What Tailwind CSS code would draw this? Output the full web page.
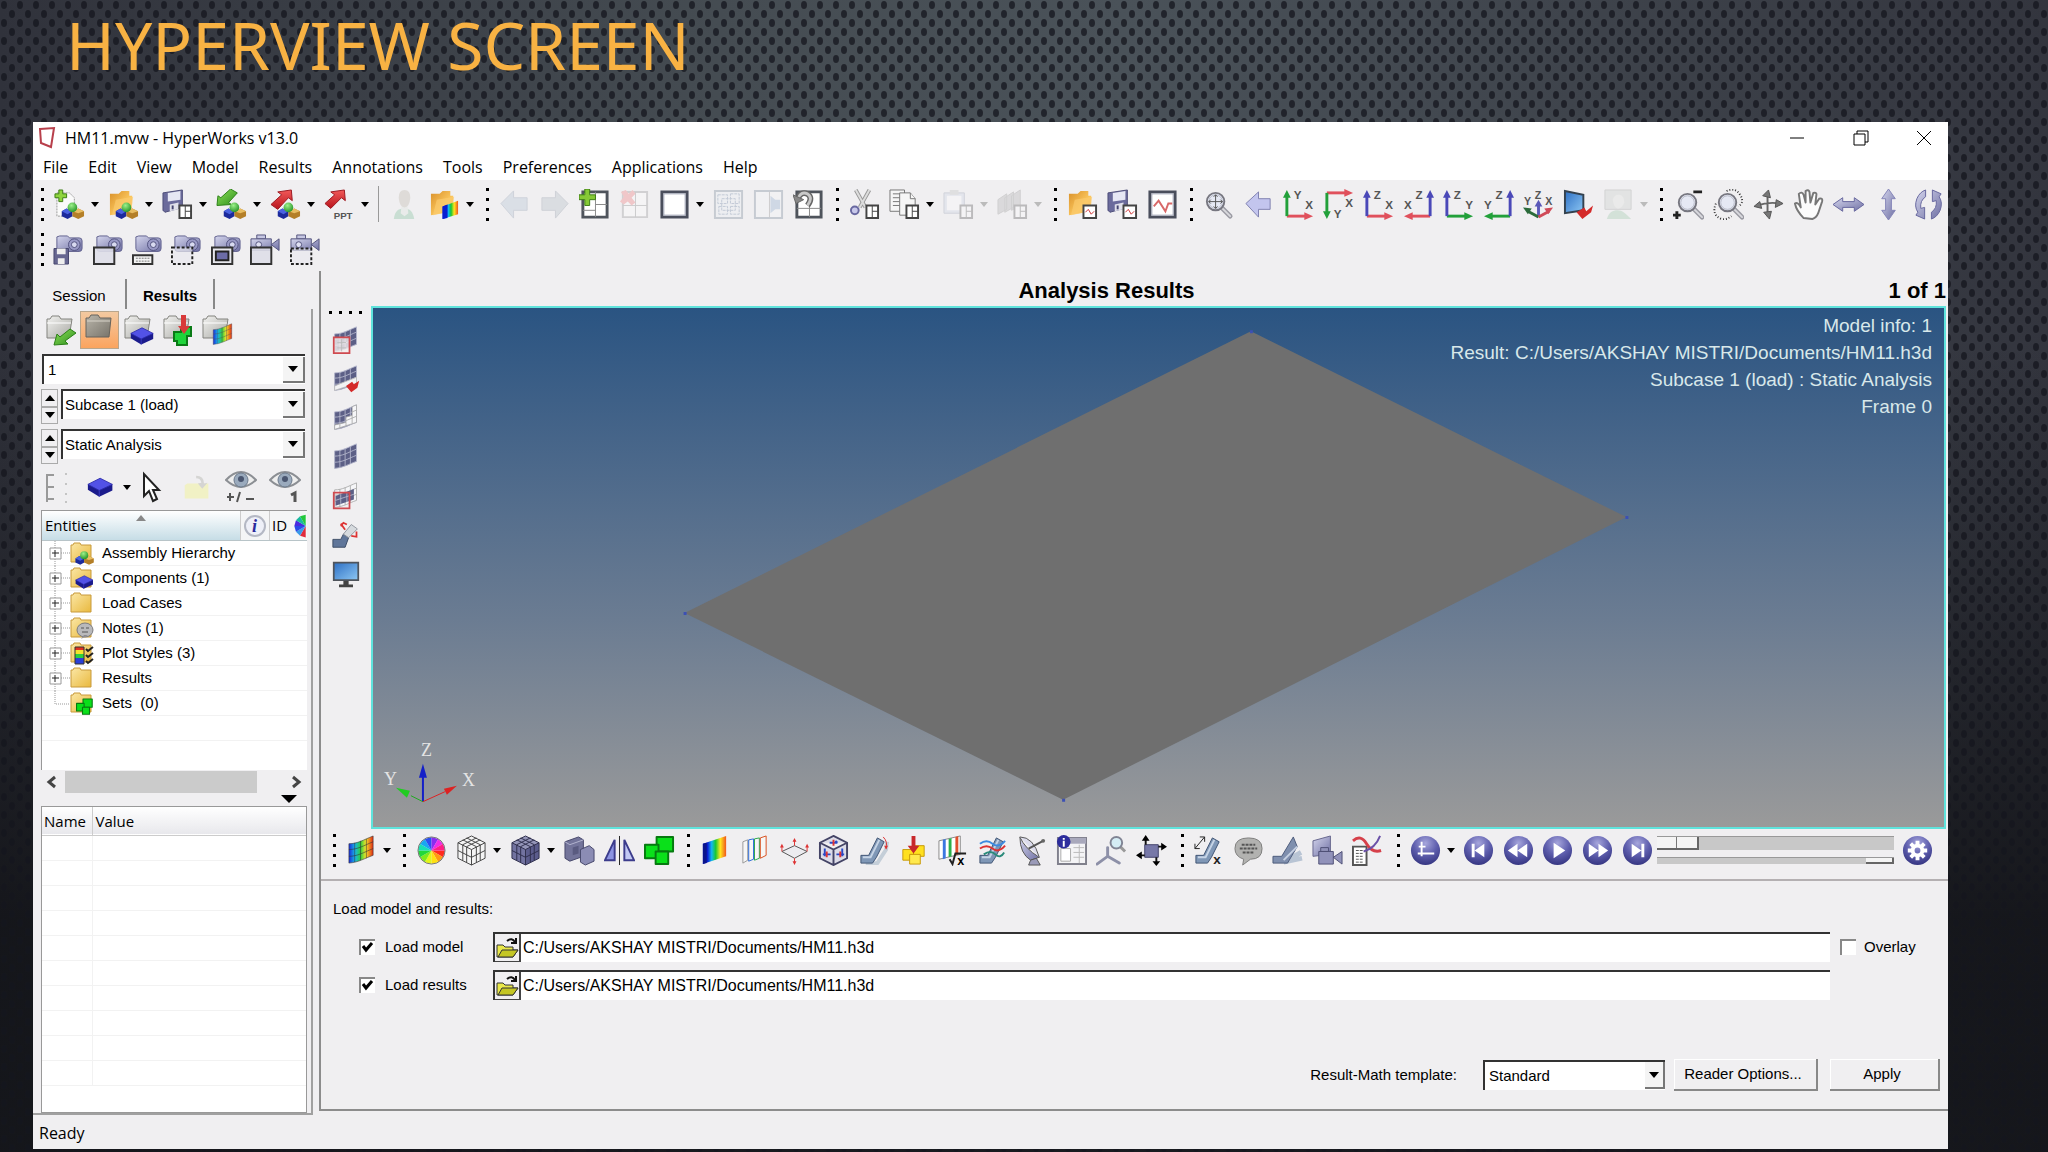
<!DOCTYPE html>
<html lang="en">

<head>
    <meta charset="UTF-8">
    <meta name="viewport" content="width=device-width, initial-scale=1.0">
    <title>Hyperview Screen</title>
    <script src="https://cdn.jsdelivr.net/npm/@tailwindcss/browser@4"></script>
</head>

<body class="relative min-h-screen flex flex-col bg-[#1b1c21] text-black font-['Liberation_Sans',sans-serif]">

    <!-- shared gradients, parts and icons -->
    <svg class="absolute w-0 h-0" aria-hidden="true">
        <defs>
            <linearGradient id="gLav" x1="0" y1="0" x2="1" y2="1"><stop offset="0" stop-color="#d4d5ec"/><stop offset="1" stop-color="#6f70a4"/></linearGradient>
            <linearGradient id="gOr" x1="0" y1="0" x2="1" y2="1"><stop offset="0" stop-color="#d9902a"/><stop offset=".6" stop-color="#fbc65c"/><stop offset="1" stop-color="#f0a832"/></linearGradient>
            <linearGradient id="gYel" x1="0" y1="0" x2="1" y2="1"><stop offset="0" stop-color="#fbe7a6"/><stop offset="1" stop-color="#e9b93f"/></linearGradient>
            <linearGradient id="gGray" x1="0" y1="0" x2="1" y2="1"><stop offset="0" stop-color="#f2f2f0"/><stop offset="1" stop-color="#a9a9a4"/></linearGradient>
            <linearGradient id="gDark" x1="0" y1="0" x2="1" y2="1"><stop offset="0" stop-color="#b9b5aa"/><stop offset="1" stop-color="#77736a"/></linearGradient>
            <linearGradient id="gRed" x1="0" y1="0" x2="0" y2="1"><stop offset="0" stop-color="#f25a5a"/><stop offset="1" stop-color="#b8141c"/></linearGradient>
            <linearGradient id="gGreen" x1="0" y1="0" x2="1" y2="1"><stop offset="0" stop-color="#8fe05a"/><stop offset="1" stop-color="#2c8f1c"/></linearGradient>
            <linearGradient id="gScr" x1="0" y1="0" x2="1" y2="1"><stop offset="0" stop-color="#2d6fc4"/><stop offset="1" stop-color="#8ec8f4"/></linearGradient>
            <linearGradient id="gRain"><stop offset="0" stop-color="#1a2bd8"/><stop offset=".25" stop-color="#18b6e8"/><stop offset=".48" stop-color="#2ecf3c"/><stop offset=".7" stop-color="#f5e22c"/><stop offset="1" stop-color="#e02a14"/></linearGradient>
            <linearGradient id="gStripe"><stop offset=".2" stop-color="#0a1ed2"/><stop offset=".38" stop-color="#12b8f0"/><stop offset=".55" stop-color="#19c832"/><stop offset=".75" stop-color="#ffe61e"/><stop offset="1" stop-color="#f0561c"/></linearGradient>
            <radialGradient id="gBall" cx=".5" cy=".25" r=".8"><stop offset="0" stop-color="#a6a6dc"/><stop offset=".5" stop-color="#5f5fae"/><stop offset="1" stop-color="#30307c"/></radialGradient>
            <radialGradient id="gGrn" cx=".4" cy=".3" r=".8"><stop offset="0" stop-color="#9df08a"/><stop offset="1" stop-color="#178a1c"/></radialGradient>

            <g id="balls">
                <path d="M8 23l5-3 6 3v5l-5 3-6-3z" fill="#1c2a9c"/><path d="M8 23l5-3 6 3-5 3z" fill="#4a62e0"/>
                <path d="M19 23l6-3 6 3v5l-6 3-6-3z" fill="#b47f28"/><path d="M19 23l6-3 6 3-6 2z" fill="#e8bd62"/>
                <circle cx="19" cy="19" r="5" fill="url(#gGrn)"/>
            </g>
            <path id="plus" d="M5 1h4v4h4v4H9v4H5V9H1V5h4z" fill="#8fd43e" stroke="#3c7d14"/>
            <g id="folderOr"><path d="M2 27V5h9l3-3h8v5h3l-1 16z" fill="url(#gOr)"/><path d="M4 27l4-16 18-3-2 15z" fill="#fbcb6e" opacity=".7"/></g>
            <g id="disk"><path d="M1 4l20-3v18L3 24l-2-2z" fill="#6b6b9c" stroke="#4c4c78"/><path d="M6 4l13-2v9L6 13z" fill="#e6e7f4"/><path d="M8 16l9-2v7l-9 2z" fill="#e0e0ea"/><path d="M10 17h2v4h-2z" fill="#444470"/></g>
            <g id="pane" fill="#fff" stroke="#444" stroke-width="2"><path d="M18 17h12v13H18z"/><path d="M24 17v13M24 23h6" stroke-width="1"/></g>
            <g id="plotpane"><path d="M17 17h13v13H17z" fill="#fff" stroke="#444" stroke-width="2"/><path d="M19 24l3-3 3 5 3-3" fill="none" stroke="#c33"/></g>
            <g id="cam"><path d="M4 5V3l3-1h8l2 2h10q3 0 3 3v8q0 3-3 3H7q-3 0-3-3z" fill="url(#gLav)" stroke="#62628e"/><circle cx="22" cy="11" r="6" fill="#9a9ac6" stroke="#52527e"/><circle cx="22" cy="11" r="3" fill="#d8daf0" stroke="#52527e"/></g>
            <g id="video"><path d="M7 1h9v4H7z" fill="#c6c7e2" stroke="#55557e"/><path d="M1 5h21v12H1zM22 11l8-6v12z" fill="url(#gLav)" stroke="#55557e"/><circle cx="9" cy="11" r="3" fill="#dfe0f2" stroke="#55557e"/></g>
            <g id="mag"><path d="M18 18l9 9" stroke="#9a9aa2" stroke-width="5" stroke-linecap="round"/><path d="M18 18l9 9" stroke="#d9d9de" stroke-width="2" stroke-linecap="round"/><circle cx="12" cy="12" r="9" fill="#e6e9f4" stroke="#777780" stroke-width="2"/><circle cx="12" cy="12" r="7" fill="none" stroke="#b9bcc8"/></g>
            <g id="cube"><path d="M16 1l14 7v16l-14 7-14-7V8z"/><path d="M2 8l14 7 14-7M16 15v16M7 5l14 7v16M25 5l-14 7v16M2 16l14 7 14-7M11 3l14 7v16M21 3L7 10v16" fill="none"/></g>
            <g id="grayfolder"><path d="M2 24V5h3l2-3h7l2 3h11l-3 19z" fill="url(#gGray)" stroke="#83837e"/><path d="M2 9h24" stroke="#fff"/></g>
            <g id="bluebox"><path d="M1 13v6l13 8 15-7v-7z" fill="#1b1b8c"/><path d="M1 13l14-7 14 7-15 7z" fill="#5252e6" stroke="#2a2aa8"/><path d="M14 20v7" stroke="#4040c8"/></g>
            <g id="tree-folder"><path d="M1 21V4h2l1-2h6l1 2h10v17z" fill="url(#gYel)" stroke="#c89a3c"/></g>
            <g id="clover" fill="#0ae01a" stroke="#067a10" stroke-width="2" stroke-linejoin="round"><path d="M13 2h17v15H13z"/><path d="M1 10h14v14H1z"/><path d="M12 17h13v13H12z"/></g>
            <g id="vmesh"><path d="M3 9C12 9 18 5 28 1v20c-9 3-14 7-25 8z"/><path d="M3 15c9 0 15-4 25-8M3 22c9 0 15-4 25-8M9 8v20M15 6v20M21 4v20" fill="none"/></g>
            <g id="beam"><path d="M3 21h8L20 3l7 4-8 16-4 6H3z" fill="#7f97b6" stroke="#3f5474"/><path d="M5 23h8L22 5" fill="none" stroke="#c6d4e6" stroke-width="2"/></g>

            <symbol id="i-grip" viewBox="0 0 16 34"><path d="M8 1h3v3H8zM8 11h3v3H8zM8 21h3v3H8zM8 31h3v3H8z"/></symbol>
            <symbol id="i-down" viewBox="0 0 10 6"><path d="M0 0h10L5 6z"/></symbol>
            <symbol id="i-up" viewBox="0 0 10 6"><path d="M0 6h10L5 0z"/></symbol>

            <symbol id="i-new" viewBox="0 0 32 32"><path d="M3 4h13l5 5v19H3z" fill="#fafafa" stroke="#999" stroke-dasharray="2 1"/><use href="#balls"/><use href="#plus"/></symbol>
            <symbol id="i-open" viewBox="0 0 32 32"><use href="#folderOr"/><use href="#balls"/></symbol>
            <symbol id="i-save" viewBox="0 0 32 32"><use href="#disk"/><use href="#pane"/></symbol>
            <symbol id="i-import" viewBox="0 0 32 32"><path d="M1 17L2 7l3 2L15 0l7 4-9 10 3 2z" fill="url(#gGreen)" stroke="#2c8018"/><use href="#balls"/></symbol>
            <symbol id="i-export" viewBox="0 0 32 32"><path d="M22 1l1 11-4-3L8 21l-7-5L12 6 8 3z" fill="url(#gRed)" stroke="#9c1820"/><use href="#balls"/></symbol>
            <symbol id="i-ppt" viewBox="0 0 32 32"><path d="M21 1l1 11-4-3L7 20l-6-5L11 6 7 3z" fill="url(#gRed)" stroke="#9c1820"/><text x="10" y="31" font-family="Liberation Sans" font-size="10" font-weight="bold" fill="#555">PPT</text></symbol>
            <symbol id="i-user" viewBox="0 0 32 32"><g opacity=".45"><path d="M5 31c1-9 5-11 11-11s9 4 10 11z" fill="#9bcbb0"/><path d="M13 17h6l1 8-4 3-4-3z" fill="#e2e8e2"/><path d="M10 9q0-8 6-8t6 8q-1 10-6 10t-6-10z" fill="#c9c4bb"/></g></symbol>
            <symbol id="i-results" viewBox="0 0 32 32"><use href="#folderOr"/><path d="M14 18l16-6v14l-16 5z" fill="url(#gStripe)"/><path d="M14 18l5-2v14l-5 1z" fill="#0a1ed2"/></symbol>
            <symbol id="i-prev" viewBox="0 0 32 32"><path d="M2 15L15 2v7h14v13H15v8z" fill="#cdd5e0" stroke="#b9c0cc" opacity=".6"/></symbol>
            <symbol id="i-next" viewBox="0 0 32 32"><path d="M30 15L17 2v7H3v13h14v8z" fill="#cdd2d8" stroke="#b9bec6" opacity=".6"/></symbol>
            <symbol id="i-addpage" viewBox="0 0 32 32"><path d="M4 3h25v26H4z" fill="#fff" stroke="#4f545c" stroke-width="3"/><path d="M17 3v26M17 16h12M4 22h13" stroke="#888"/><path d="M6 0h5v6h6v5h-6v6H6v-6H0V6h6z" fill="#86c936" stroke="#3c7d14"/></symbol>
            <symbol id="i-delpage" viewBox="0 0 32 32"><g opacity=".35"><path d="M4 3h25v26H4z" fill="#fff" stroke="#999" stroke-width="2"/><path d="M17 3v26M4 17h25" stroke="#888"/><path d="M2 3l5-2 3 4 4-4 3 4-4 4 4 5-4 3-4-4-4 3-4-3 4-5z" fill="#f08080"/></g></symbol>
            <symbol id="i-layout" viewBox="0 0 32 32"><path d="M3 3h26v26H3z" fill="#fff" stroke="#4a4e5c" stroke-width="3"/><path d="M5 5h22v22H5z" fill="none" stroke="#9ea2b4"/></symbol>
            <symbol id="i-swap" viewBox="0 0 32 32"><g opacity=".4"><path d="M2 2h28v28H2z" fill="#e9eef2" stroke="#8a96a4" stroke-width="2"/><path d="M5 6h10v9H5zM18 5h9v10h-9zM6 18h9v8H6zM18 18h9v8h-9zM9 10h14v12H9z" fill="none" stroke="#7f93ae" stroke-dasharray="3 1"/></g></symbol>
            <symbol id="i-expand" viewBox="0 0 32 32"><g opacity=".4"><path d="M2 2h28v28H2z" fill="#f4f6f7" stroke="#8a96a4" stroke-width="2"/><path d="M17 3v26" stroke="#999"/><path d="M18 7l5 4h5v10h-5l-5 4z" fill="#9fb8d4"/></g></symbol>
            <symbol id="i-sync" viewBox="0 0 32 32"><path d="M4 3h25v26H4z" fill="#fff" stroke="#4f545c" stroke-width="3"/><path d="M17 3v26M4 20h25" stroke="#888"/><path d="M5 10q3-8 10-5 6 4 0 12" fill="none" stroke="#666" stroke-width="6"/><path d="M5 10q3-8 10-5 6 4 0 12" fill="none" stroke="#c9c9c9" stroke-width="3"/><path d="M0 6l3 9 8-4z" fill="#888" stroke="#666"/></symbol>
            <symbol id="i-cut" viewBox="0 0 32 32"><path d="M7 1l10 18M21 1L11 19" stroke="#999" stroke-width="4"/><path d="M7 1l10 18M21 1L11 19" stroke="#ddd" stroke-width="2"/><circle cx="6" cy="22" r="4" fill="#c8c8ea" stroke="#6868a0" stroke-width="2"/><use href="#pane"/></symbol>
            <symbol id="i-copy" viewBox="0 0 32 32"><g fill="#f6f6f6" stroke="#777"><path d="M1 1h15v22H1z"/><path d="M4 5h9M4 9h9M4 13h9M4 17h9"/><path d="M11 4h11l5 6v17H11z"/><path d="M22 4v6h5"/></g><use href="#pane"/></symbol>
            <symbol id="i-paste" viewBox="0 0 32 32"><g opacity=".3"><path d="M1 4h21v21H1z" fill="#c7d0e2" stroke="#8a94a8"/><path d="M4 7h15v15H4z" fill="#fff"/><path d="M7 1h9v5H7z" fill="#bbb"/><use href="#pane"/></g></symbol>
            <symbol id="i-overlay" viewBox="0 0 32 32"><g opacity=".3"><path d="M1 11l9-6v16l-9 5zM8 9l9-6v16l-9 5zM15 7l9-6v16l-9 5z" fill="#aaa" stroke="#888"/><use href="#pane"/></g></symbol>
            <symbol id="i-openplot" viewBox="0 0 32 32"><use href="#folderOr"/><use href="#plotpane"/></symbol>
            <symbol id="i-saveplot" viewBox="0 0 32 32"><use href="#disk"/><use href="#plotpane"/></symbol>
            <symbol id="i-plot" viewBox="0 0 32 32"><path d="M3 3h26v26H3z" fill="#fff" stroke="#4a4e5c" stroke-width="3"/><path d="M5 5h22v22H5z" fill="none" stroke="#9ea2b4"/><path d="M7 18l5-6 7 11 3-8h4" fill="none" stroke="#d86868" stroke-width="2"/></symbol>
            <symbol id="i-fit" viewBox="0 0 32 32"><g transform="translate(1 1)"><use href="#mag"/><path d="M12 5v14M5 12h14M10 7l2-2 2 2M10 17l2 2 2-2M7 10l-2 2 2 2M17 10l2 2-2 2" fill="none" stroke="#555"/></g></symbol>
            <symbol id="i-back" viewBox="0 0 32 32"><path d="M3 15L16 3v7h12v11H16v8z" fill="#c3c5ee" stroke="#7f80b0"/></symbol>

            <g id="ax-up"><path d="M4 28V8" stroke-width="3"/><path d="M0 9l4-8 4 8z" stroke="none"/></g>
            <g id="ax-right"><path d="M4 28h20" stroke-width="3"/><path d="M22 24l9 4-9 4z" stroke="none"/></g>
            <symbol id="i-yx" viewBox="0 0 32 32"><g stroke="#e0505c" fill="#e0505c"><use href="#ax-right"/></g><g stroke="#22a03a" fill="#22a03a"><use href="#ax-up"/></g><g font-family="Liberation Sans" font-size="12" font-weight="bold" fill="#555"><text x="11" y="10">Y</text><text x="23" y="21">X</text></g></symbol>
            <symbol id="i-xy" viewBox="0 0 32 32"><g transform="matrix(1 0 0 -1 0 32)"><g stroke="#e0505c" fill="#e0505c"><use href="#ax-right"/></g><g stroke="#22a03a" fill="#22a03a"><use href="#ax-up"/></g></g><g font-family="Liberation Sans" font-size="12" font-weight="bold" fill="#555"><text x="11" y="30">Y</text><text x="23" y="19">X</text></g></symbol>
            <symbol id="i-zx" viewBox="0 0 32 32"><g stroke="#e0505c" fill="#e0505c"><use href="#ax-right"/></g><g stroke="#4a48b8" fill="#4a48b8"><use href="#ax-up"/></g><g font-family="Liberation Sans" font-size="12" font-weight="bold" fill="#555"><text x="11" y="10">Z</text><text x="23" y="21">X</text></g></symbol>
            <symbol id="i-xz" viewBox="0 0 32 32"><g transform="matrix(-1 0 0 1 32 0)"><g stroke="#e0505c" fill="#e0505c"><use href="#ax-right"/></g><g stroke="#4a48b8" fill="#4a48b8"><use href="#ax-up"/></g></g><g font-family="Liberation Sans" font-size="12" font-weight="bold" fill="#555"><text x="13" y="10">Z</text><text x="1" y="21">X</text></g></symbol>
            <symbol id="i-zy" viewBox="0 0 32 32"><g stroke="#22a03a" fill="#22a03a"><use href="#ax-right"/></g><g stroke="#4a48b8" fill="#4a48b8"><use href="#ax-up"/></g><g font-family="Liberation Sans" font-size="12" font-weight="bold" fill="#555"><text x="11" y="10">Z</text><text x="23" y="21">Y</text></g></symbol>
            <symbol id="i-yz" viewBox="0 0 32 32"><g transform="matrix(-1 0 0 1 32 0)"><g stroke="#22a03a" fill="#22a03a"><use href="#ax-right"/></g><g stroke="#4a48b8" fill="#4a48b8"><use href="#ax-up"/></g></g><g font-family="Liberation Sans" font-size="12" font-weight="bold" fill="#555"><text x="13" y="10">Z</text><text x="1" y="21">Y</text></g></symbol>
            <symbol id="i-iso" viewBox="0 0 32 32"><path d="M16 29V16" stroke="#5a58b8" stroke-width="3"/><path d="M12 18l4-7 4 7z" fill="#5a58b8"/><path d="M16 29L5 23" stroke="#2b6a3a" stroke-width="3"/><path d="M0 19l9 1-4 6z" fill="#2b6a3a"/><path d="M16 29l11-6" stroke="#d04a58" stroke-width="3"/><path d="M31 19l-9 1 4 6z" fill="#d04a58"/><g font-family="Liberation Sans" font-size="11" font-weight="bold" fill="#555"><text x="1" y="17">Y</text><text x="12" y="10">Z</text><text x="23" y="17">X</text></g></symbol>
            <symbol id="i-applyview" viewBox="0 0 32 32"><path d="M2 2l19 4v16L2 25z" fill="url(#gScr)" stroke="#34414e" stroke-width="2"/><path d="M14 24l8-5 2 4 7-6-2 7-9 7z" fill="#d42a2a"/></symbol>
            <symbol id="i-savedview" viewBox="0 0 32 32"><g opacity=".4"><path d="M2 1h27v20H2z" fill="#cfd3d0" stroke="#a8aaa8"/><path d="M4 31c2-7 6-9 11-9s8 3 14 9z" fill="#a9cdb4"/><path d="M10 11q2-6 7-5t5 8q-3 7-7 6t-5-9z" fill="#e2e4e0"/></g></symbol>
            <symbol id="i-zoom" viewBox="0 0 32 32"><g transform="translate(3 2)"><use href="#mag"/></g><path d="M21 3h9M0 27h8M4 23v8" stroke="#222" stroke-width="3"/></symbol>
            <symbol id="i-circlezoom" viewBox="0 0 32 32"><g transform="translate(3 2)"><use href="#mag"/></g><path d="M14 2q9-4 14 4t-2 12M3 15q-5 12 6 16 5 1 10-3" fill="none" stroke="#333" stroke-width="2" stroke-dasharray="1 2"/></symbol>
            <symbol id="i-rotate" viewBox="0 0 32 32"><path d="M15 4v24M4 17q12-4 24-2" fill="none" stroke="#666" stroke-width="2"/><path d="M10 7l6-6 2 8zM11 24l6 7 2-8zM7 13l-6 5 8 2zM24 11l7 4-8 4z" fill="#777" stroke="#555"/></symbol>
            <symbol id="i-pan" viewBox="0 0 32 32"><path d="M11 30C6 25 3 20 2 15q3-2 6 4L6 5q3-3 5 1l2 8V2q3-2 4 1l1 11 3-10q4-1 3 3l-1 9 4-6q4-1 3 3l-4 12q-2 5-6 6z" fill="#fcfcfc" stroke="#777" stroke-width="2" stroke-linejoin="round"/></symbol>
            <symbol id="i-horiz" viewBox="0 0 32 32"><path d="M0 16l10-7v4h12V9l10 7-10 7v-4H10v4z" fill="url(#gLav)" stroke="#66669e"/></symbol>
            <symbol id="i-vert" viewBox="0 0 32 32"><path d="M16 0l7 10h-4v12h4l-7 10-7-10h4V10H9z" fill="url(#gLav)" stroke="#8484b8"/></symbol>
            <symbol id="i-spin" viewBox="0 0 32 32"><path d="M13 1v7q-6 4-5 12l4-1v12l-9-4 2-3Q1 18 4 10q3-7 9-9zM19 31v-7q6-4 5-12l-4 1V1l9 4-2 3q4 6 1 14-3 7-9 9z" fill="url(#gLav)" stroke="#66669e"/></symbol>

            <symbol id="i-camsave" viewBox="0 0 32 32"><use href="#cam"/><path d="M1 15h15v16H1z" fill="#666690" stroke="#44446c"/><path d="M4 15h9v6H4zM5 25h7v6H5z" fill="#eee"/></symbol>
            <symbol id="i-camwin" viewBox="0 0 32 32"><use href="#cam"/><path d="M1 14h21v17H1z" fill="#dedee8" fill-opacity=".9" stroke="#333" stroke-width="2"/></symbol>
            <symbol id="i-camkey" viewBox="0 0 32 32"><use href="#cam"/><path d="M1 22h20v9H1z" fill="#f4f4f4" stroke="#333" stroke-width="2"/><path d="M4 25h14M4 28h14" stroke="#777" stroke-dasharray="2 1"/></symbol>
            <symbol id="i-camsel" viewBox="0 0 32 32"><use href="#cam"/><path d="M1 14h21v17H1z" fill="#e8e8ee" fill-opacity=".7" stroke="#222" stroke-width="2" stroke-dasharray="3 2"/></symbol>
            <symbol id="i-camview" viewBox="0 0 32 32"><use href="#cam"/><path d="M1 14h21v17H1z" fill="#e8e8ee" stroke="#333" stroke-width="2"/><path d="M5 18h13v9H5z" fill="#6c6ca6" stroke="#222" stroke-width="2"/></symbol>
            <symbol id="i-vidwin" viewBox="0 0 32 32"><use href="#video"/><path d="M1 14h21v17H1z" fill="#dedee8" fill-opacity=".9" stroke="#333" stroke-width="2"/></symbol>
            <symbol id="i-vidsel" viewBox="0 0 32 32"><use href="#video"/><path d="M1 15h21v16H1z" fill="#e8e8ee" fill-opacity=".7" stroke="#222" stroke-width="2" stroke-dasharray="3 2"/></symbol>

            <symbol id="i-f-load" viewBox="0 0 32 32"><use href="#grayfolder"/><path d="M9 31l3-11 3 3 10-8 6 4-11 8 3 3z" fill="url(#gGreen)" stroke="#2c8018"/></symbol>
            <symbol id="i-f-all" viewBox="0 0 32 32"><path d="M2 23V4h3l2-3h7l2 3h11l-2 19z" fill="url(#gDark)" stroke="#66635c"/><path d="M3 7h23" stroke="#d8d4ca"/></symbol>
            <symbol id="i-f-comp" viewBox="0 0 32 32"><use href="#grayfolder"/><g transform="translate(7 9) scale(.8)"><use href="#bluebox"/></g></symbol>
            <symbol id="i-f-set" viewBox="0 0 32 32"><use href="#grayfolder"/><path d="M19 13h10v9h-4v9H15v-4h-3v-9h7z" fill="#1fd43a" stroke="#0a7a16" stroke-width="2"/><path d="M19 1h5v11h4l-6 8-6-8h3z" fill="#d83a3a"/></symbol>
            <symbol id="i-f-plot" viewBox="0 0 32 32"><use href="#grayfolder"/><g transform="translate(10 9) scale(.74)" fill="url(#gRain)" stroke="#555" stroke-opacity=".6"><use href="#vmesh"/></g></symbol>
            <symbol id="i-bluebox" viewBox="0 0 32 32"><use href="#bluebox"/></symbol>
            <symbol id="i-cursor" viewBox="0 0 32 32"><path d="M9 3v22l5-5 4 10 4-2-4-9h6z" fill="#fff" stroke="#222" stroke-width="2"/></symbol>
            <symbol id="i-faded" viewBox="0 0 32 32"><g opacity=".6"><path d="M2 14l3-2h24v17H2z" fill="#f3f3a8"/><path d="M15 3q9 0 9 9l4-1-6 7-5-6 4-1q-1-5-6-5z" fill="#c4c4c0"/></g></symbol>
            <g id="eye"><path d="M1 9Q16-7 31 9 16 23 1 9z" fill="#eee" stroke="#8c8f94" stroke-width="2"/><circle cx="16" cy="9" r="7" fill="#9aaabd" stroke="#6c7a8c"/><circle cx="16" cy="8" r="3" fill="#4a5670"/></g>
            <symbol id="i-eyepm" viewBox="0 0 32 32"><use href="#eye"/><path d="M2 26h7M5 22v8M21 28h8M15 21l-3 10" stroke="#555" stroke-width="2"/></symbol>
            <symbol id="i-eye1" viewBox="0 0 32 32"><use href="#eye"/><path d="M22 24l4-2v9" fill="none" stroke="#555" stroke-width="3"/></symbol>
            <symbol id="i-hier" viewBox="0 0 32 32"><path d="M6 3v28M6 4h7M6 16h7M6 28h7" stroke="#999" stroke-width="2"/><path d="M24 2h2v2h-2zM24 12h2v2h-2zM24 22h2v2h-2zM24 30h2v2h-2z" fill="#c4c4c4"/></symbol>
            <symbol id="i-info" viewBox="0 0 24 24"><circle cx="12" cy="12" r="10" fill="#eef0f8" stroke="#b4b8c4" stroke-width="2"/><text x="9" y="18" font-family="Liberation Serif" font-size="18" font-weight="bold" font-style="italic" fill="#2a2a9c">i</text></symbol>

            <symbol id="i-t-asm" viewBox="0 0 24 24"><use href="#tree-folder"/><g transform="translate(-1 -1) scale(.8)"><use href="#balls"/></g></symbol>
            <symbol id="i-t-comp" viewBox="0 0 24 24"><use href="#tree-folder"/><g transform="translate(5 6) scale(.62)"><use href="#bluebox"/></g></symbol>
            <symbol id="i-t-plain" viewBox="0 0 24 24"><use href="#tree-folder"/></symbol>
            <symbol id="i-t-note" viewBox="0 0 24 24"><use href="#tree-folder"/><ellipse cx="15" cy="14" rx="8" ry="7" fill="#b9b9bb" stroke="#7c7c80"/><path d="M11 23l3-4h4z" fill="#8c8c90"/><path d="M11 12h3M16 12h3M12 16h6" stroke="#555"/></symbol>
            <symbol id="i-t-style" viewBox="0 0 24 24"><use href="#tree-folder"/><path d="M5 6h9v17H5z" fill="#e03020"/><path d="M5 9h9v14H5z" fill="#f5e22c"/><path d="M5 13h9v10H5z" fill="#2ecf3c"/><path d="M5 17h9v6H5z" fill="#2a3fd8"/><path d="M5 6h9v17H5z" fill="none" stroke="#333"/><path d="M16 8l2 2 5-4M16 14l2 2 5-4M16 20l2 2 5-4" fill="none" stroke="#222" stroke-width="2"/></symbol>
            <symbol id="i-t-set" viewBox="0 0 24 24"><use href="#tree-folder"/><g transform="translate(6 7) scale(.54)"><use href="#clover"/></g></symbol>

            <symbol id="i-contour" viewBox="0 0 32 32"><g fill="url(#gRain)" stroke="#333" stroke-opacity=".6"><use href="#vmesh"/></g></symbol>
            <symbol id="i-wheel" viewBox="0 0 32 32">
                <path d="M16 16L30 16 28 23z" fill="#ff2a1e"/><path d="M16 16L28 23 23 28z" fill="#ff9a12"/><path d="M16 16L23 28 16 30z" fill="#ffe012"/>
                <path d="M16 16L16 30 9 28z" fill="#e2f51a"/><path d="M16 16L9 28 4 23z" fill="#7eea1c"/><path d="M16 16L4 23 2 16z" fill="#22d83a"/>
                <path d="M16 16L2 16 4 9z" fill="#18e0b4"/><path d="M16 16L4 9 9 4z" fill="#18a8f0"/><path d="M16 16L9 4 16 2z" fill="#2a50f0"/>
                <path d="M16 16L16 2 23 4z" fill="#8a2cf0"/><path d="M16 16L23 4 28 9z" fill="#f02ce6"/><path d="M16 16L28 9 30 16z" fill="#ff1e86"/>
                <circle cx="16" cy="16" r="14" fill="none" stroke="#777" stroke-width="1"/></symbol>
            <symbol id="i-wheelhalf" viewBox="2 0 14 32">
                <path d="M16 16L16 30 9 28z" fill="#e02a3c"/><path d="M16 16L9 28 4 23z" fill="#3a9ae8"/><path d="M16 16L4 23 2 16z" fill="#2a4ae8"/>
                <path d="M16 16L2 16 4 9z" fill="#4a2ae0"/><path d="M16 16L4 9 9 4z" fill="#18b8a0"/><path d="M16 16L9 4 16 2z" fill="#22c83a"/></symbol>
            <symbol id="i-wire" viewBox="0 0 32 32"><g fill="#f4f4f4" stroke="#444"><use href="#cube"/></g></symbol>
            <symbol id="i-shaded" viewBox="0 0 32 32"><path d="M2 8l14-7 14 7-14 7z" fill="#9495b8"/><path d="M2 8l14 7v16L2 24z" fill="#7273a0"/><path d="M30 8l-14 7v16l14-7z" fill="#5b5c8c"/><g fill="none" stroke="#2e2e4c"><use href="#cube"/></g></symbol>
            <symbol id="i-parts" viewBox="0 0 32 32"><path d="M1 7l14-5 5 3v17L6 27l-5-3z" fill="#73749a" stroke="#46476a"/><path d="M1 7l5 3 14-5" fill="none" stroke="#b4b5d0"/><path d="M17 15l9-4 5 4v12l-9 4-5-3z" fill="#8b8cb4" stroke="#46476a"/><path d="M9 13l6-2v8l-6 2z" fill="#5a5b80"/></symbol>
            <symbol id="i-mirror" viewBox="0 0 32 32"><path d="M11 5v21H1z" fill="#8c94e2" stroke="#3c3c8c" stroke-width="2"/><path d="M21 5v21h10z" fill="#c2c8f4" stroke="#3c3c8c" stroke-width="2"/><path d="M16 1v30" stroke="#222"/></symbol>
            <symbol id="i-clover" viewBox="0 0 32 32"><use href="#clover"/></symbol>
            <symbol id="i-bands" viewBox="0 0 32 32"><path d="M4 9L28 1v21L4 30z" fill="url(#gStripe)"/><path d="M4 9l4-1v21l-4 1z" fill="#0a148c"/></symbol>
            <symbol id="i-iso2" viewBox="0 0 32 32"><g fill="#f6f6f6"><path d="M4 7l5-2v21l-5 3z" stroke="#999"/><path d="M10 5l5-1v21l-5 2z" stroke="#2a6ad8"/><path d="M16 4l5-1v21l-5 2z" stroke="#2aa84a"/><path d="M22 3l6-2v20l-6 3z" stroke="#d8501e"/></g></symbol>
            <symbol id="i-vector" viewBox="0 0 32 32"><path d="M3 17l13-6 13 6-13 7z" fill="#ececf0" stroke="#555"/><path d="M16 11V5M3 17v-5M29 17v-5M16 24v5" stroke="#d33"/><path d="M14 7l2-4 2 4zM1 13l2-4 2 4zM27 13l2-4 2 4zM14 27h4l-2 4z" fill="#d33"/></symbol>
            <symbol id="i-tensor" viewBox="0 0 32 32"><path d="M16 1l14 7v16l-14 7-14-7V8zM2 8l14 7 14-7M16 15v16" fill="#dcdce8" stroke="#444466" stroke-width="2"/><path d="M12 8h8M20 8l-2-2M7 14v8M5 20h8M25 14v8M19 20h8" stroke="#2a4ac8" stroke-width="2" fill="none"/><path d="M16 5v6M9 17v6M23 17v6" stroke="#d33" stroke-width="2"/></symbol>
            <symbol id="i-deform" viewBox="0 0 32 32"><path d="M8 29h12l9-14 1-8" fill="none" stroke="#c4ced8" stroke-width="4"/><use href="#beam"/><path d="M26 2q5 5 3 12" fill="none" stroke="#d33"/><path d="M27 11l2 4 2-4z" fill="#d33"/></symbol>
            <symbol id="i-fbd" viewBox="0 0 32 32"><path d="M16 11h11v11H16z" fill="#ffe01e" stroke="#c79a0a"/><path d="M5 15h11v11H5z" fill="#ffe01e" stroke="#c79a0a"/><path d="M12 20h11v10H12z" fill="#ffe94e" stroke="#c79a0a"/><path d="M14 1h4v10h4l-6 8-6-8h4z" fill="#c8282c"/></symbol>
            <symbol id="i-derived" viewBox="0 0 32 32"><path d="M2 6L24 1v19L2 25z" fill="#fff" stroke="#888"/><path d="M6 5l3-1v20l-3 1z" fill="#3c78e0"/><path d="M12 4l3-1v19l-3 1z" fill="#2cb04a"/><path d="M19 2l3-1v19l-3 1z" fill="#e0502c"/><path d="M13 25l3 5 3-11h11" fill="none" stroke="#222" stroke-width="2"/><text x="21" y="31" font-family="Liberation Sans" font-size="13" font-weight="bold">x</text></symbol>
            <symbol id="i-stream" viewBox="0 0 32 32"><use href="#beam"/><g fill="none" stroke-width="2"><path d="M3 9q7-5 13 0t13-3" stroke="#3c8ae0"/><path d="M3 14q7-5 13 0t13-3" stroke="#d33"/><path d="M7 20q7-5 12 0t9-2" stroke="#2a8a7a"/></g></symbol>
            <symbol id="i-dish" viewBox="0 0 32 32"><path d="M3 2q0 17 11 24l9-3Q8 14 3 2z" fill="url(#gLav)" stroke="#555"/><path d="M3 2q14 0 20 21" fill="#dcdcec" stroke="#555"/><path d="M12 14L27 6" stroke="#555" stroke-width="2"/><circle cx="27" cy="6" r="2" fill="#666"/><path d="M14 26l-2 5h12l-4-7z" fill="#9a9ab8" stroke="#555"/></symbol>
            <symbol id="i-table" viewBox="0 0 32 32"><path d="M2 3h29v27H2z" fill="#f4f4f6" stroke="#80808c" stroke-width="2"/><path d="M2 3h29v6H2z" fill="#a9a9bc"/><path d="M5 14h10v13H5z" fill="#fff" stroke="#aaa"/><path d="M18 13h11M18 18h11M18 23h11M24 10v19" stroke="#bbb"/><circle cx="8" cy="7" r="7" fill="#2c2c9c"/><path d="M7 3h2v2H7zM7 6h2v6H7z" fill="#fff"/></symbol>
            <symbol id="i-query" viewBox="0 0 32 32"><path d="M1 30l11-8V13M12 22l12 7" fill="none" stroke="#8d90a8" stroke-width="3" stroke-linecap="round"/><path d="M25 12l5 5" stroke="#999" stroke-width="3"/><circle cx="21" cy="8" r="6" fill="#d4ecf4" stroke="#808494" stroke-width="2"/></symbol>
            <symbol id="i-measure" viewBox="0 0 32 32"><path d="M9 10h14v13H9z" fill="#7778a8" stroke="#44446c"/><path d="M10 10V5M23 12h5M21 23v5M9 21H4" stroke="#111" stroke-width="2"/><path d="M6 6l4-6 4 6zM26 8l6 4-6 4zM17 27l4 5 4-5zM6 17l-6 4 6 4z"/></symbol>
            <symbol id="i-trace" viewBox="0 0 32 32"><use href="#beam"/><path d="M2 14L12 2M2 9v5h5M7 2h5v5" fill="none" stroke="#222"/><text x="21" y="30" font-family="Liberation Sans" font-size="14" font-weight="bold" fill="#222">x</text></symbol>
            <symbol id="i-note" viewBox="0 0 32 32"><path d="M16 3q14 0 14 11T18 25l-8 6 1-6Q2 22 2 14 2 3 16 3z" fill="#b2b2b0" stroke="#7d7d7c"/><path d="M9 10h14M7 14h18M10 18h12" stroke="#555" stroke-width="2" stroke-dasharray="3 1"/></symbol>
            <symbol id="i-track" viewBox="0 0 32 32"><path d="M12 28l18-10M12 28l19-4" stroke="#b8c4d4" stroke-width="5"/><path d="M1 22h9L22 2l4 10-10 17H1z" fill="#7f8fae" stroke="#4b5a7a"/><path d="M12 26L26 12" stroke="#c6d0e2" stroke-width="2"/></symbol>
            <symbol id="i-camtrack" viewBox="0 0 32 32"><path d="M1 6l18-5v19L1 22z" fill="url(#gLav)" stroke="#66668c"/><path d="M7 17h15v13H7zM22 23l9-6v13zM9 13h8v4H9z" fill="#9192ba" stroke="#4e4f76"/></symbol>
            <symbol id="i-build" viewBox="0 0 32 32"><path d="M1 12h14v19H1z" fill="#fff" stroke="#555" stroke-width="2"/><path d="M4 16h8M4 19h8M4 22h8M4 25h8M4 28h8" stroke="#555" stroke-dasharray="3 1"/><path d="M1 6q8-7 14 3t15 7" fill="none" stroke="#d6404a" stroke-width="3"/><path d="M12 17Q24 14 29 1" fill="none" stroke="#6a50a8" stroke-width="2"/></symbol>

            <g id="disc"><circle cx="16" cy="16" r="15" fill="url(#gBall)"/></g>
            <symbol id="i-axis" viewBox="0 0 32 32"><use href="#disc"/><path d="M12 7v15M8 19h17M9 12h7" stroke="#fff" stroke-width="2"/></symbol>
            <symbol id="i-first" viewBox="0 0 32 32"><use href="#disc"/><path d="M9 9h3v14H9zM22 9v14l-10-7z" fill="#fff"/></symbol>
            <symbol id="i-rew" viewBox="0 0 32 32"><use href="#disc"/><path d="M15 9v14L5 16zM25 9v14l-10-7z" fill="#fff"/></symbol>
            <symbol id="i-play" viewBox="0 0 32 32"><use href="#disc"/><path d="M12 8v16l12-8z" fill="#fff"/></symbol>
            <symbol id="i-fwd" viewBox="0 0 32 32"><use href="#disc"/><path d="M7 9v14l10-7zM17 9v14l10-7z" fill="#fff"/></symbol>
            <symbol id="i-last" viewBox="0 0 32 32"><use href="#disc"/><path d="M20 9h3v14h-3zM10 9v14l10-7z" fill="#fff"/></symbol>
            <symbol id="i-gear" viewBox="0 0 32 32"><use href="#disc"/><circle cx="16" cy="16" r="5" fill="none" stroke="#fff" stroke-width="4"/><path d="M16 6v4M16 22v4M6 16h4M22 16h4M9 9l3 3M20 20l3 3M23 9l-3 3M9 23l3-3" stroke="#fff" stroke-width="4"/></symbol>

            <g id="mesh-dark" fill="#5c5f86" stroke="#b4b6cc"><use href="#vmesh"/></g>
            <symbol id="i-m-box" viewBox="0 0 32 32"><use href="#mesh-dark"/><path d="M2 13h18v18H2z" fill="#f4eeee" fill-opacity=".8" stroke="#cf4a50" stroke-width="2"/><path d="M6 19h10M6 25h10M11 15v14" stroke="#bbb"/></symbol>
            <symbol id="i-m-red" viewBox="0 0 32 32"><use href="#mesh-dark"/><path d="M15 19l13-5v7l-25 8v-5z" fill="#f2f2f4" stroke="#bbb"/><path d="M16 24l7-5 2 3 6-4-2 8-7 5z" fill="#d42a2a"/></symbol>
            <symbol id="i-m-half" viewBox="0 0 32 32"><use href="#mesh-dark"/><path d="M23 3l5-2v20l-25 8v-5l13-3v-6l7-2z" fill="#f6f6f8" stroke="#aaa"/><path d="M23 9l5-2M16 19l12-5M9 23v4M16 21v4M23 13v9" stroke="#aaa"/></symbol>
            <symbol id="i-m-full" viewBox="0 0 32 32"><use href="#mesh-dark"/></symbol>
            <symbol id="i-m-redbox" viewBox="0 0 32 32"><g fill="#f6f6f8" stroke="#aaa"><use href="#vmesh"/></g><path d="M4 16l21-8v12L4 27z" fill="#5c5f86"/><path d="M4 21l21-7M10 14v11M17 11v12" stroke="#b4b6cc"/><path d="M2 12h18v18H2z" fill="none" stroke="#cf4a50" stroke-width="2"/></symbol>
            <symbol id="i-m-move" viewBox="0 0 32 32"><path d="M1 21h9l3-6 6 4-4 11H1z" fill="#60769a" stroke="#33455f"/><path d="M13 15l9-11 7 5-10 10z" fill="#d6dade" stroke="#8a8f98"/><path d="M10 6l3-4 4 2M28 12v6l-6-1M15 10L10 3" fill="none" stroke="#d33" stroke-width="2"/></symbol>
            <symbol id="i-m-screen" viewBox="0 0 32 32"><path d="M2 3h28v20H2z" fill="url(#gScr)" stroke="#4f545c" stroke-width="2"/><path d="M13 24h6v4h5v3H8v-3h5z" fill="#444"/></symbol>
        </defs>
    </svg>

    <!-- perforated slide background -->
    <svg class="absolute inset-0 w-full h-full" aria-hidden="true">
        <defs>
            <linearGradient id="bgX"><stop offset="0" stop-color="#30323b"/><stop offset=".35" stop-color="#454c52"/><stop offset=".55" stop-color="#4a5259"/><stop offset="1" stop-color="#33353e"/></linearGradient>
            <linearGradient id="bgY" x1="0" y1="0" x2="0" y2="1"><stop offset=".3" stop-color="#101115" stop-opacity="0"/><stop offset=".8" stop-color="#101115" stop-opacity=".85"/></linearGradient>
            <pattern id="holes" width="16" height="18" patternUnits="userSpaceOnUse"><ellipse cx="4" cy="5" rx="3" ry="4" fill="#14151d" opacity=".75"/><ellipse cx="12" cy="14" rx="3" ry="4" fill="#14151d" opacity=".75"/></pattern>
        </defs>
        <rect width="100%" height="100%" fill="url(#bgX)"/>
        <rect width="100%" height="100%" fill="url(#bgY)"/>
        <rect width="100%" height="100%" fill="url(#holes)"/>
    </svg>

    <h1 class="relative h-[122px] pl-[66px] text-[66px] leading-[88px] text-[#f8b243] font-['Noto_Sans',sans-serif]">HYPERVIEW SCREEN</h1>

    <main class="relative grow flex flex-col ml-[33px] mr-[100px] mb-[3px] bg-[#f0eff1]">

        <!-- title bar and menu -->
        <header class="bg-white font-['Open_Sans',sans-serif] text-[16px]">
            <div class="h-8 flex items-center">
                <svg class="w-5 h-6 ml-1" viewBox="0 0 20 24"><path d="M3 3l14-1-3 19-10-4z" fill="#fff" stroke="#b8404c" stroke-width="2"/></svg>
                <span class="ml-2">HM11.mvw - HyperWorks v13.0</span>
                <div class="ml-auto flex items-center">
                    <button class="w-16 h-7 grid place-items-center" aria-label="Minimize"><svg class="size-4" viewBox="0 0 16 16"><path d="M1 8h14" stroke="#000"/></svg></button>
                    <button class="w-16 h-7 grid place-items-center mr-2" aria-label="Restore"><svg class="size-4" viewBox="0 0 16 16"><path d="M1 4h11v11H1zM4 4V1h11v11h-3" fill="none" stroke="#000"/></svg></button>
                    <button class="w-[46px] h-7 grid place-items-center mr-px" aria-label="Close"><svg class="size-4" viewBox="0 0 16 16"><path d="M1 1l14 14M15 1L1 15" stroke="#000"/></svg></button>
                </div>
            </div>
            <nav class="h-[26px] flex items-center gap-5 pl-[10px]">
                <a href="#">File</a><a href="#">Edit</a><a href="#">View</a><a href="#">Model</a><a href="#">Results</a><a href="#">Annotations</a><a href="#">Tools</a><a href="#">Preferences</a><a href="#">Applications</a><a href="#">Help</a>
            </nav>
        </header>

        <div class="h-[46px] mt-px flex items-center" data-tools="| new+ open+ save+ import+ export+ ppt+ / user results+ | prev next addpage delpage layout+ swap expand sync | cut copy+ paste- overlay- | openplot saveplot plot | fit back yx xy zx xz zy yz iso applyview savedview- | zoom circlezoom rotate pan horiz vert spin"></div>
        <div class="h-[44px] w-[292px] flex items-center" data-tools="| camsave camwin camkey camsel camview vidwin vidsel"></div>

        <div class="grow flex">

            <!-- browser panel -->
            <aside class="w-[280px] shrink-0 flex flex-col mb-[34px] text-[15px]">
                <div class="flex h-[30px] pl-2 mt-2">
                    <button class="w-[86px] pr-2 pt-1 border-r-2 border-[#888]">Session</button>
                    <button class="w-[88px] pt-1 border-r-2 border-[#888] font-bold">Results</button>
                </div>
                <div class="grow flex flex-col pl-2 pr-1 border-r-2 border-b-2 border-[#a0a0a0]">
                    <div class="flex items-center h-[42px]">
                        <button class="w-[39px] h-[38px] grid place-items-center" aria-label="Load"><svg class="size-8"><use href="#i-f-load"/></svg></button>
                        <button class="w-[39px] h-[38px] grid place-items-center border border-[#b9a68c] bg-linear-to-b from-[#f3c9a0] to-[#fba45e]" aria-label="All"><svg class="size-8"><use href="#i-f-all"/></svg></button>
                        <button class="w-[39px] h-[38px] grid place-items-center" aria-label="Components"><svg class="size-8"><use href="#i-f-comp"/></svg></button>
                        <button class="w-[39px] h-[38px] grid place-items-center" aria-label="Sets"><svg class="size-8"><use href="#i-f-set"/></svg></button>
                        <button class="w-[39px] h-[38px] grid place-items-center" aria-label="Plot styles"><svg class="size-8"><use href="#i-f-plot"/></svg></button>
                    </div>
                    <div class="relative h-[30px] mr-[2px] mt-[3px] ml-px">
                        <select aria-label="Model" class="appearance-none w-full h-full pl-1 bg-white border-t-2 border-l-2 border-[#333]"><option>1</option></select>
                        <span class="pointer-events-none absolute right-0 top-[3px] w-[22px] h-[26px] grid place-items-center bg-[#f4f4f4] border-r-2 border-b-2 border-[#777]"><svg class="w-[10px] h-[6px]"><use href="#i-down"/></svg></span>
                    </div>
                    <div class="flex gap-[3px] mt-[5px] mr-[2px] h-[35px]">
                        <div class="flex flex-col w-[17px]">
                            <button class="grow grid place-items-center border border-[#aaa]" aria-label="Previous subcase"><svg class="w-[10px] h-[6px]"><use href="#i-up"/></svg></button>
                            <button class="grow grid place-items-center border border-[#aaa]" aria-label="Next subcase"><svg class="w-[10px] h-[6px]"><use href="#i-down"/></svg></button>
                        </div>
                        <div class="relative grow h-[30px]">
                            <select aria-label="Subcase" class="appearance-none w-full h-full pl-[2px] bg-white border-t-2 border-l-2 border-[#333]"><option>Subcase 1 (load)</option></select>
                            <span class="pointer-events-none absolute right-0 top-[3px] w-[22px] h-[26px] grid place-items-center bg-[#f4f4f4] border-r-2 border-b-2 border-[#777]"><svg class="w-[10px] h-[6px]"><use href="#i-down"/></svg></span>
                        </div>
                    </div>
                    <div class="flex gap-[3px] mt-[5px] mr-[2px] h-[35px]">
                        <div class="flex flex-col w-[17px]">
                            <button class="grow grid place-items-center border border-[#aaa]" aria-label="Previous simulation"><svg class="w-[10px] h-[6px]"><use href="#i-up"/></svg></button>
                            <button class="grow grid place-items-center border border-[#aaa]" aria-label="Next simulation"><svg class="w-[10px] h-[6px]"><use href="#i-down"/></svg></button>
                        </div>
                        <div class="relative grow h-[30px]">
                            <select aria-label="Simulation" class="appearance-none w-full h-full pl-[2px] bg-white border-t-2 border-l-2 border-[#333]"><option>Static Analysis</option></select>
                            <span class="pointer-events-none absolute right-0 top-[3px] w-[22px] h-[26px] grid place-items-center bg-[#f4f4f4] border-r-2 border-b-2 border-[#777]"><svg class="w-[10px] h-[6px]"><use href="#i-down"/></svg></span>
                        </div>
                    </div>
                    <div class="flex items-center h-[46px]">
                        <svg class="size-8"><use href="#i-hier"/></svg>
                        <button class="ml-[14px]" aria-label="Component mode"><svg class="size-7"><use href="#i-bluebox"/></svg></button>
                        <svg class="w-[8px] h-[5px] ml-2"><use href="#i-down"/></svg>
                        <button class="ml-1" aria-label="Select"><svg class="size-8"><use href="#i-cursor"/></svg></button>
                        <button class="ml-4" aria-label="Reverse"><svg class="size-7"><use href="#i-faded"/></svg></button>
                        <button class="ml-[14px]" aria-label="Show or hide"><svg class="size-8"><use href="#i-eyepm"/></svg></button>
                        <button class="ml-[12px]" aria-label="Isolate"><svg class="size-8"><use href="#i-eye1"/></svg></button>
                    </div>
                    <div class="bg-white border-l border-t border-[#999] flex flex-col h-[260px]">
                        <div class="relative flex items-center h-[30px] bg-linear-to-b from-white to-[#c6dde6] font-['Open_Sans',sans-serif] border-b border-[#b8c4c8]">
                            <span class="grow pl-[3px]">Entities</span>
                            <svg class="absolute left-[94px] top-1 w-[10px] h-[6px] fill-[#888]"><use href="#i-up"/></svg>
                            <div class="flex items-center h-full bg-[#f4f5f6] border-l border-[#ccc]">
                                <svg class="size-6 mx-[2px]"><use href="#i-info"/></svg>
                                <span class="w-6 h-full pl-[2px] leading-[28px] border-l border-[#ccc]">ID</span>
                                <svg class="w-[14px] h-[26px]"><use href="#i-wheelhalf"/></svg>
                            </div>
                        </div>
                        <ul id="tree"></ul>
                        <div class="h-[25px] border-b border-[#f2f2f2]"></div>
                    </div>
                    <div class="flex items-center h-6" role="scrollbar" aria-controls="tree" aria-valuenow="0">
                        <svg class="w-6 h-4" viewBox="0 0 24 16"><path d="M14 3l-6 5 6 5" fill="none" stroke="#444" stroke-width="3"/></svg>
                        <div class="w-[192px] h-[22px] bg-[#cbcbcb]"></div>
                        <svg class="w-6 h-4 ml-auto" viewBox="0 0 24 16"><path d="M10 3l6 5-6 5" fill="none" stroke="#444" stroke-width="3"/></svg>
                    </div>
                    <div class="flex justify-end h-3 pr-[10px] pt-px"><svg class="w-4 h-2" viewBox="0 0 10 6" preserveAspectRatio="none"><use href="#i-down" width="10" height="6"/></svg></div>
                    <div class="grow bg-white border border-[#999]">
                        <table class="w-full font-['Open_Sans',sans-serif]">
                            <thead><tr class="h-7 bg-linear-to-b from-white to-[#e8e8ec] border-b border-[#ccc]"><th class="w-[50px] pl-[2px] font-normal text-left border-r border-[#ccc]">Name</th><th class="pl-[3px] font-normal text-left">Value</th></tr></thead>
                            <tbody id="props"></tbody>
                        </table>
                    </div>
                </div>
            </aside>

            <section class="grow min-w-0 flex flex-col ml-[6px] mb-[38px] border-l-2 border-b-2 border-[#8c8c8c]">
                <div class="flex">
                    <!-- display options -->
                    <div class="w-[50px] shrink-0 flex justify-center pt-10">
                        <svg class="w-[34px] h-[3px]" viewBox="0 0 34 3"><path d="M0 0h3v3H0zM10 0h3v3h-3zM20 0h3v3h-3zM30 0h3v3h-3z"/></svg>
                    </div>
                    <div class="relative grow flex items-end justify-center h-[34px] pr-[106px] text-[22px] font-bold leading-[28px]">
                        <h2>Analysis Results</h2>
                        <span class="absolute right-[2px] bottom-0">1 of 1</span>
                    </div>
                </div>
                <div class="grow flex -mt-2">
                    <div class="w-[50px] shrink-0 flex flex-col items-center pt-[14px]" data-column="m-box m-red m-half m-full m-redbox m-move m-screen"></div>
                    <div class="relative grow mr-[2px] border-2 border-[#5fe3dc] bg-linear-to-b from-[#2a5482] via-[#6b7c92] via-60% to-[#9a9a9a]">
                        <svg class="absolute inset-0 w-full h-full" viewBox="0 0 1573 519">
                            <path d="M312 305L879 23l376 186-564 283z" fill="#6f6f6f"/>
                            <path d="M311 304h3v3h-3zM878 22h3v3h-3zM1254 208h3v3h-3zM690 491h3v3h-3z" fill="#3c50b4"/>
                            <path d="M50 494V466" stroke="#1420c8" stroke-width="2"/><path d="M46 470l4-14 4 14z" fill="#1420c8"/>
                            <path d="M50 494l22-10" stroke="#d22" stroke-width="1"/><path d="M84 478l-13 3 3 6z" fill="#d22"/>
                            <path d="M50 494l-12-6" stroke="#2a2" stroke-width="1"/><path d="M23 480l14 3-3 7z" fill="#2c2"/>
                            <g font-family="Liberation Serif" font-size="18" fill="#e4e4e4"><text x="48" y="448">Z</text><text x="11" y="477">Y</text><text x="89" y="478">X</text></g>
                        </svg>
                        <div class="absolute right-3 top-1 text-right text-[19px] leading-[27px] text-[#d8e8ea]">
                            <p>Model info: 1</p>
                            <p>Result: C:/Users/AKSHAY MISTRI/Documents/HM11.h3d</p>
                            <p>Subcase 1 (load) : Static Analysis</p>
                            <p>Frame 0</p>
                        </div>
                    </div>
                </div>

                <div class="flex items-center h-[52px] pl-1 pb-[8px] border-b-2 border-[#b4b0b2]">
                    <div class="flex" data-tools="| contour+ | wheel wire+ shaded+ parts mirror clover |"></div>
                    <div class="flex w-[476px]" data-tools="bands iso2 vector tensor deform fbd derived stream dish table query measure"></div>
                    <div class="flex pl-[2px]" data-tools="|"></div>
                    <div class="flex w-[198px]" data-tools="trace note track camtrack build"></div>
                    <div class="flex pl-[2px]" data-tools="| axis+"></div>
                    <div class="flex w-[198px]" data-tools="first rew play fwd last"></div>
                    <div class="grow h-7 flex flex-col justify-between">
                        <div class="flex h-[14px] bg-[#c8c8c8] border-t border-[#999]">
                            <div class="flex w-[42px] h-[13px] bg-[#f4f4f4] border-r-2 border-b-2 border-[#666]"><div class="w-1/2 border-r border-[#777]"></div></div>
                        </div>
                        <div class="flex justify-end h-[7px] bg-[#c8c8c8] border-t border-[#999]">
                            <div class="w-7 h-[6px] bg-[#f4f4f4] border-r-2 border-b-2 border-[#666]"></div>
                        </div>
                    </div>
                    <div class="flex pl-[3px] pr-[11px]" data-tools="gear"></div>
                </div>

                <!-- load model panel -->
                <form class="flex flex-col h-[228px] pl-3 pr-2 text-[15px]">
                    <p class="mt-[14px] leading-7">Load model and results:</p>
                    <div class="grid grid-cols-[26px_108px_1fr_110px] items-center mt-[9px] ml-[26px]">
                        <span class="relative size-4">
                            <input id="load-model" type="checkbox" checked class="peer appearance-none block size-4 bg-white border-t-2 border-l-2 border-[#888]">
                            <svg class="pointer-events-none absolute inset-0 size-4 hidden peer-checked:block" viewBox="0 0 16 16"><path d="M4 7l3 4 6-7" fill="none" stroke="#000" stroke-width="3"/></svg>
                        </span>
                        <label for="load-model">Load model</label>
                        <div class="flex h-[30px] border-t-2 border-l-2 border-[#333] bg-white">
                            <button type="button" class="w-[26px] grid place-items-center border-r-2 border-b border-[#444] bg-[#f0eff1]" aria-label="Browse model"><svg class="size-6" viewBox="0 0 24 24"><path d="M2 21V9h6l2 2h8v3h5l-5 7z" fill="#e9e84a" stroke="#333"/><path d="M3 21l4-7h16l-5 7z" fill="#c4c624" stroke="#333"/><path d="M12 5q5-4 8 1M21 2v5h-5" fill="none" stroke="#111" stroke-width="2"/></svg></button>
                            <input aria-label="Model file" class="grow min-w-0 pl-[2px] text-[16px]" value="C:/Users/AKSHAY MISTRI/Documents/HM11.h3d">
                        </div>
                        <div class="flex items-center gap-2 pl-[10px]">
                            <input id="overlay" type="checkbox" class="appearance-none size-4 bg-white border-t-2 border-l-2 border-[#888]">
                            <label for="overlay">Overlay</label>
                        </div>
                    </div>
                    <div class="grid grid-cols-[26px_108px_1fr_110px] items-center mt-2 ml-[26px]">
                        <span class="relative size-4">
                            <input id="load-results" type="checkbox" checked class="peer appearance-none block size-4 bg-white border-t-2 border-l-2 border-[#888]">
                            <svg class="pointer-events-none absolute inset-0 size-4 hidden peer-checked:block" viewBox="0 0 16 16"><path d="M4 7l3 4 6-7" fill="none" stroke="#000" stroke-width="3"/></svg>
                        </span>
                        <label for="load-results">Load results</label>
                        <div class="flex h-[30px] border-t-2 border-l-2 border-[#333] bg-white">
                            <button type="button" class="w-[26px] grid place-items-center border-r-2 border-b border-[#444] bg-[#f0eff1]" aria-label="Browse results"><svg class="size-6" viewBox="0 0 24 24"><path d="M2 21V9h6l2 2h8v3h5l-5 7z" fill="#e9e84a" stroke="#333"/><path d="M3 21l4-7h16l-5 7z" fill="#c4c624" stroke="#333"/><path d="M12 5q5-4 8 1M21 2v5h-5" fill="none" stroke="#111" stroke-width="2"/></svg></button>
                            <input aria-label="Results file" class="grow min-w-0 pl-[2px] text-[16px]" value="C:/Users/AKSHAY MISTRI/Documents/HM11.h3d">
                        </div>
                    </div>
                    <div class="flex items-center justify-end mt-auto mb-[18px]">
                        <label for="template" class="mr-[26px]">Result-Math template:</label>
                        <div class="relative w-[182px] h-[30px] mr-[9px]">
                            <select id="template" class="appearance-none w-full h-full pl-1 bg-white border-t-2 border-l-2 border-[#333]"><option>Standard</option></select>
                            <span class="pointer-events-none absolute right-0 top-[2px] w-5 h-[27px] grid place-items-center bg-[#f4f4f4] border-r-2 border-b-2 border-[#777]"><svg class="w-[10px] h-[6px]"><use href="#i-down"/></svg></span>
                        </div>
                        <button type="button" class="w-36 h-8 pr-1 mr-3 border-r-2 border-b-2 border-[#888] shadow-[inset_1px_1px_#fff]">Reader Options...</button>
                        <button type="button" class="w-[110px] h-8 pr-1 border-r-2 border-b-2 border-[#888] shadow-[inset_1px_1px_#fff]">Apply</button>
                    </div>
                </form>
            </section>
        </div>

        <footer class="absolute bottom-0 left-0 pl-[6px] h-8 leading-8 text-[16px] font-['Open_Sans',sans-serif]">Ready</footer>
    </main>

    <script>
        // "|" is a grip, "/" a divider, a trailing "+" or "-" an enabled or disabled menu arrow
        document.querySelectorAll('[data-tools]').forEach((bar) => {
            bar.innerHTML = bar.dataset.tools.split(' ').map((t) => {
                if (t === '|') return '<svg class="w-4 h-[34px] shrink-0 self-center"><use href="#i-grip"/></svg>';
                if (t === '/') return '<span class="w-px h-9 mx-[5px] bg-[#999]"></span>';
                const name = t.replace(/[+-]$/, '');
                let html = `<button class="w-10 h-10 grid place-items-center" aria-label="${name}"><svg class="size-[31px]"><use href="#i-${name}"/></svg></button>`;
                if (t.endsWith('+')) html += '<svg class="w-[8px] h-[5px] ml-[2px] mr-1 shrink-0 self-center"><use href="#i-down"/></svg>';
                if (t.endsWith('-')) html += '<svg class="w-[8px] h-[5px] ml-[2px] mr-1 shrink-0 self-center fill-[#bbb]"><use href="#i-down"/></svg>';
                return html;
            }).join('');
        });

        document.querySelectorAll('[data-column]').forEach((bar) => {
            bar.innerHTML = bar.dataset.column.split(' ').map((name) =>
                `<button class="size-[39px] grid place-items-center" aria-label="${name}"><svg class="size-7"><use href="#i-${name}"/></svg></button>`
            ).join('');
        });

        const entities = [
            ['t-asm', 'Assembly Hierarchy'],
            ['t-comp', 'Components (1)'],
            ['t-plain', 'Load Cases'],
            ['t-note', 'Notes (1)'],
            ['t-style', 'Plot Styles (3)'],
            ['t-plain', 'Results'],
            ['t-set', 'Sets  (0)'],
        ];
        document.getElementById('tree').innerHTML = entities.map(([icon, label], i) => `
            <li class="flex items-center h-[25px] border-b border-[#f2f2f2]">
                <svg class="w-7 h-[25px] shrink-0" viewBox="0 0 28 25">
                    <path d="${i === 6 ? 'M13 0v13h15' : 'M13 0v25M13 12h15'}" fill="none" stroke="#999" stroke-dasharray="1 1"/>
                    ${i === 6 ? '' : '<path d="M8 7h11v11H8z" fill="#fff" stroke="#999"/><path d="M10 12h7M13 9v7" stroke="#222"/>'}
                </svg>
                <svg class="size-6 shrink-0"><use href="#i-${icon}"/></svg>
                <span class="ml-2 whitespace-pre">${label}</span>
            </li>`).join('');
        document.getElementById('props').innerHTML = Array(10).fill('<tr class="h-[25px] border-b border-[#f2f2f2]"><td class="border-r border-[#f2f2f2]"></td><td></td></tr>').join('');
    </script>
</body>

</html>
